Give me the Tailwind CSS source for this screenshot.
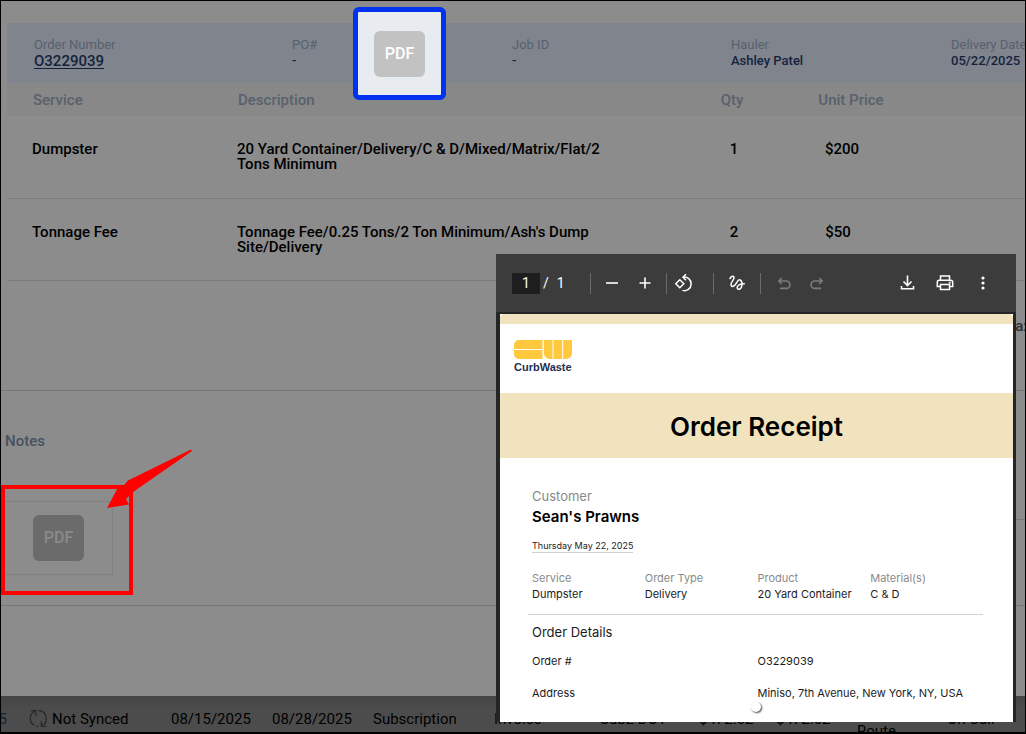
<!DOCTYPE html>
<html lang="en">
<head>
    <meta charset="UTF-8">
    <meta name="viewport" content="width=device-width, initial-scale=1.0">
    <title>Order O3229039</title>

    <script src="https://cdn.jsdelivr.net/npm/@tailwindcss/browser@4"></script>
</head>
<body class="font-[Roboto,sans-serif] text-[15px] text-black">
    <div class="relative h-screen overflow-hidden flex flex-col bg-[#8c8c8c] border border-b-2 border-black">

        <!-- Order summary -->
        <header class="ml-1.5 mt-[22px] h-[60px] shrink-0 pl-[27px] pt-3.5 flex bg-[#80848d] text-[13px] leading-4 text-[#57616e] whitespace-nowrap">
            <div class="w-[258px] shrink-0">
                <p>Order Number</p>
                <a href="#" class="text-[15px] font-medium text-[#14233d] underline underline-offset-2">O3229039</a>
            </div>
            <div class="w-[220px] shrink-0">
                <p>PO#</p>
                <p class="font-medium text-[#14233d]">-</p>
            </div>
            <div class="w-[219px] shrink-0">
                <p>Job ID</p>
                <p class="font-medium text-[#14233d]">-</p>
            </div>
            <div class="w-[220px] shrink-0">
                <p>Hauler</p>
                <p class="font-medium text-[#14233d]">Ashley Patel</p>
            </div>
            <div>
                <p>Delivery Date</p>
                <p class="font-medium text-[#14233d]">05/22/2025</p>
            </div>
        </header>

        <!-- Order items -->
        <div class="ml-1.5 shrink-0">
            <table class="w-full table-fixed font-medium leading-[15px] text-left">
                <thead>
                    <tr class="h-[33px] bg-[#888888] text-[#57616e]">
                        <th class="w-[230px] pl-[26px] pt-0.5 font-medium">Service</th>
                        <th class="w-[452px] pl-px pt-0.5 font-medium">Description</th>
                        <th class="w-[86px] pt-0.5 font-medium text-center">Qty</th>
                        <th class="w-[152px] pt-0.5 font-medium text-center">Unit Price</th>
                        <td></td>
                    </tr>
                </thead>
                <tbody>
                    <tr class="h-[82px] align-top border-b border-[#787b7f]">
                        <td class="pl-[25px] pt-[26px]">Dumpster</td>
                        <td class="pt-[26px] pr-[72px]">20 Yard Container/Delivery/C &amp; D/Mixed/Matrix/Flat/2 Tons Minimum</td>
                        <td class="pl-1 pt-[26px] text-center">1</td>
                        <td class="pt-[26px] pr-[18px] text-center">$200</td>
                        <td></td>
                    </tr>
                    <tr class="h-[82px] align-top border-b border-[#787b7f]">
                        <td class="pl-[25px] pt-[26px]">Tonnage Fee</td>
                        <td class="pt-[26px] pr-[72px]">Tonnage Fee/0.25 Tons/2 Ton Minimum/Ash's Dump Site/Delivery</td>
                        <td class="pl-1 pt-[26px] text-center">2</td>
                        <td class="pt-[26px] pr-[26px] text-center">$50</td>
                        <td></td>
                    </tr>
                </tbody>
            </table>
        </div>

        <!-- Totals -->
        <div class="h-[110px] shrink-0 pt-[34px] flex justify-end border-b border-[#777777]">
            <p class="w-[18px] shrink-0 font-medium text-[#2c2f33]">Tax</p>
        </div>

        <!-- Notes -->
        <section class="h-[215px] shrink-0 flex justify-between border-b border-[#777777]">
            <div>
                <h2 class="pl-1 pt-10 leading-5 font-medium text-[#48525f]">Notes</h2>
                <div class="mt-[50px] w-28 h-[74px] pl-8 pt-[13px] border border-l-0 border-[#7f7f7f]">
                    <button type="button" class="w-[51px] h-[46px] rounded-md bg-[#6b6b6b] text-base font-medium text-[#8a8a8a]">PDF</button>
                </div>
            </div>
            <div class="w-1/3 h-[129px] border-b border-[#777777]"></div>
        </section>
        <div class="h-[90px] shrink-0"></div>

        <!-- Orders list behind the dialog -->
        <div class="grow min-h-0 overflow-hidden pt-[13px] flex bg-linear-to-b from-[#464646] to-[#4c4c4c] to-40% leading-5 whitespace-nowrap">
            <span class="w-7 shrink-0 relative"><span class="absolute right-[22px] text-[#14233d]">5</span></span>
            <span class="w-[142px] shrink-0 flex gap-1">
                <svg class="size-[19px] text-[#2a2a2a]" viewBox="0 0 18 18" fill="none" stroke="currentColor" stroke-width="1.3">
                    <path d="M1.500 1.500h5v5M6.300 1.800A7.600 7.600 0 0 0 5 15.500"/>
                    <path d="M9 1.400a7.600 7.600 0 0 1 3.500 14.200M9 16.600a8 8 0 0 1-2-.3"/>
                    <path d="M16.500 16.500h-4.800v-5"/>
                </svg>
                Not Synced
            </span>
            <span class="w-[101px] shrink-0">08/15/2025</span>
            <span class="w-[101px] shrink-0">08/28/2025</span>
            <span class="w-[121px] shrink-0">Subscription</span>
            <span class="w-[72px] shrink-0">Invoice</span>
            <span class="w-[34px] shrink-0">-</span>
            <span class="w-[99px] shrink-0">Sub2 DOT</span>
            <span class="w-[77px] shrink-0">$472.02</span>
            <span class="w-[81px] shrink-0">$472.02</span>
            <span class="w-[90px] shrink-0 pt-3">Route</span>
            <span>On Call</span>
        </div>

        <!-- PDF viewer -->
        <div class="absolute left-[495px] right-[9px] top-[253px] h-[468px] flex flex-col bg-[#242626]">
            <div class="h-[58px] shrink-0 pl-4 flex items-center bg-[#3c3c3c] text-white text-sm">
                <input type="text" value="1" aria-label="Page number" class="w-7 h-[21px] bg-[#1e1e1e] text-center">
                <span class="w-[50px] pl-[3px] flex gap-2"><span>/</span><span>1</span></span>
                <span class="w-px h-[21px] bg-[#6b6b6b]"></span>
                <button type="button" aria-label="Zoom out" class="ml-[11px]">
                    <svg class="size-5" viewBox="0 0 20 20" stroke="currentColor" stroke-width="1.6"><path d="M4 10h12"/></svg>
                </button>
                <button type="button" aria-label="Zoom in" class="ml-[13px]">
                    <svg class="size-5" viewBox="0 0 20 20" stroke="currentColor" stroke-width="1.6"><path d="M4.500 10h11M10 4.500v11"/></svg>
                </button>
                <span class="ml-[11px] w-px h-[21px] bg-[#6b6b6b]"></span>
                <button type="button" aria-label="Rotate counterclockwise" class="ml-[7px]">
                    <svg class="size-5" viewBox="0 0 20 20" fill="none" stroke="currentColor" stroke-width="1.5">
                        <path d="M5.800 6.800 9.800 10.800 5.800 14.800 1.800 10.800z"/>
                        <path d="M9 4.200A6.800 6.800 0 1 1 8.500 17.400"/>
                        <path d="M12 1.200 9 4.200l3 3"/>
                    </svg>
                </button>
                <span class="ml-[19px] w-px h-[21px] bg-[#6b6b6b]"></span>
                <button type="button" aria-label="Draw" class="ml-[13px]">
                    <svg class="size-5" viewBox="0 0 20 20" fill="none" stroke="currentColor" stroke-width="1.5" stroke-linecap="round">
                        <path d="M3 5.500C4.500 3 7 2.500 7 4.800c0 2-3 4.200-3 6.600 0 4 4 1.200 5.200-1 1.300-2.400 2.600-4.400 4.300-3.200 2.600 1.800 1.500 9-1.500 9-3.400 0-2.200-5.500 5.300-5.500"/>
                    </svg>
                </button>
                <span class="ml-[13px] w-px h-[21px] bg-[#6b6b6b]"></span>
                <button type="button" aria-label="Undo" disabled class="ml-[13px] text-[#7c7c7c]">
                    <svg class="size-5" viewBox="0 0 20 20" fill="none" stroke="currentColor" stroke-width="1.6">
                        <path d="M7.800 5 4.800 8l3 3M5 8h7.200a3.700 3.700 0 0 1 0 7.400H6"/>
                    </svg>
                </button>
                <button type="button" aria-label="Redo" disabled class="ml-[13px] text-[#7c7c7c]">
                    <svg class="size-5" viewBox="0 0 20 20" fill="none" stroke="currentColor" stroke-width="1.6">
                        <path d="M12.200 5l3 3-3 3M15 8H7.800a3.700 3.700 0 0 0 0 7.400H14"/>
                    </svg>
                </button>
                <div class="ml-auto mr-[23px] flex gap-[17px]">
                    <button type="button" aria-label="Download">
                        <svg class="size-5" viewBox="0 0 20 20" fill="none" stroke="currentColor" stroke-width="1.6">
                            <path d="M10.500 2.500v9.500M6.500 8.500l4 4 4-4M4.500 13v2.700h12V13"/>
                        </svg>
                    </button>
                    <button type="button" aria-label="Print" class="px-px">
                        <svg class="size-5" viewBox="0 0 20 20" fill="none" stroke="currentColor" stroke-width="1.5">
                            <path d="M5.500 7V3h9v4M5.500 13.500H2.300V9.200C2.300 8 3 7.300 4.200 7.300h11.600c1.200 0 1.900.7 1.900 1.900v4.300h-3.200"/>
                            <path d="M5.500 11.500h9v5h-9z"/>
                            <circle cx="14.800" cy="9.700" r=".4"/>
                        </svg>
                    </button>
                    <button type="button" aria-label="More actions">
                        <svg class="size-5" viewBox="0 0 20 20" fill="currentColor">
                            <circle cx="10" cy="5" r="1.600"/><circle cx="10" cy="10" r="1.600"/><circle cx="10" cy="15" r="1.600"/>
                        </svg>
                    </button>
                </div>
            </div>

            <div class="grow mt-0.5 ml-1 mr-[3px] bg-white font-[Inter,sans-serif] text-[11px] text-[#1c1c1c]">
                <div class="h-2.5 rounded-t-sm bg-[#f1e3be]"></div>
                <div class="h-[69px] pl-3.5 pt-4">
                    <svg class="w-[58px] h-[19px]" viewBox="0 0 58 19" fill="#ffc83d">
                        <path d="M5 0h23.500v9H0V5a5 5 0 0 1 5-5zM0 10h28.500v9H5a5 5 0 0 1-5-5z"/>
                        <path d="M29.800 0h8.700v19h-2.700a6 6 0 0 1-6-6zM39.500 0h8.700v19h-8.700zM49.200 0H58v13a6 6 0 0 1-6 6h-2.800z"/>
                    </svg>
                    <p class="mt-0.5 font-[Liberation_Sans,sans-serif] text-[11px] leading-[13px] font-bold text-[#1d3050]">CurbWaste</p>
                </div>
                <h1 class="h-[65px] bg-[#f1e3be] text-center text-[26px] leading-[68px] font-semibold text-black">Order Receipt</h1>

                <div class="pl-8 pr-[30px]">
                    <p class="pt-[30px] text-[13px] leading-4 text-[#8a8a8a]">Customer</p>
                    <p class="mt-[5px] text-[15px] leading-4 font-semibold text-black">Sean's Prawns</p>
                    <p class="mt-[15px] w-fit text-[9px] leading-3 border-b border-[#cfcfcf]">Thursday May 22, 2025</p>

                    <div class="mt-[17px] grid grid-cols-4 leading-4 whitespace-nowrap">
                        <div><p class="text-[#8a8a8a]">Service</p><p>Dumpster</p></div>
                        <div><p class="text-[#8a8a8a]">Order Type</p><p>Delivery</p></div>
                        <div><p class="text-[#8a8a8a]">Product</p><p>20 Yard Container</p></div>
                        <div><p class="text-[#8a8a8a]">Material(s)</p><p>C &amp; D</p></div>
                    </div>
                    <hr class="mt-3 -ml-1 border-[#d3d2dc]">

                    <h2 class="mt-[9px] text-[13px] leading-4">Order Details</h2>
                    <dl class="mt-[13px] grid grid-cols-2 gap-y-4 leading-4 whitespace-nowrap">
                        <dt>Order #</dt><dd>O3229039</dd>
                        <dt>Address</dt><dd>Miniso, 7th Avenue, New York, NY, USA</dd>
                    </dl>
                </div>
            </div>
            <!-- Drag handle -->
            <span class="absolute left-[255px] top-[448px] size-2.5 rounded-full bg-white shadow-[1px_1px_2px_#444]"></span>
        </div>

        <!-- Enlarged PDF button -->
        <div class="absolute left-[352px] top-1.5 size-[93px] rounded-md border-5 border-[#0033f0] bg-[#e8ebf0] flex items-center justify-center">
            <button type="button" class="w-[51px] h-[46px] rounded-md bg-[#c2c2c2] text-base font-medium text-white">PDF</button>
        </div>

        <!-- Red highlight and arrow -->
        <div class="absolute left-0 top-[484px] w-[132px] h-[110px] border-4 border-[#fe0000]"></div>
        <svg class="absolute left-[106px] top-[448px] w-[86px] h-[60px]" viewBox="0 0 86 60" fill="#fe0000">
            <path d="M84 .5 85 2 27.500 42 21 31.500zM0 59 11.500 37.500 14 39.500 21 31.500 27.500 42 19 50 22 55.500z"/>
        </svg>
    </div>
</body>
</html>
